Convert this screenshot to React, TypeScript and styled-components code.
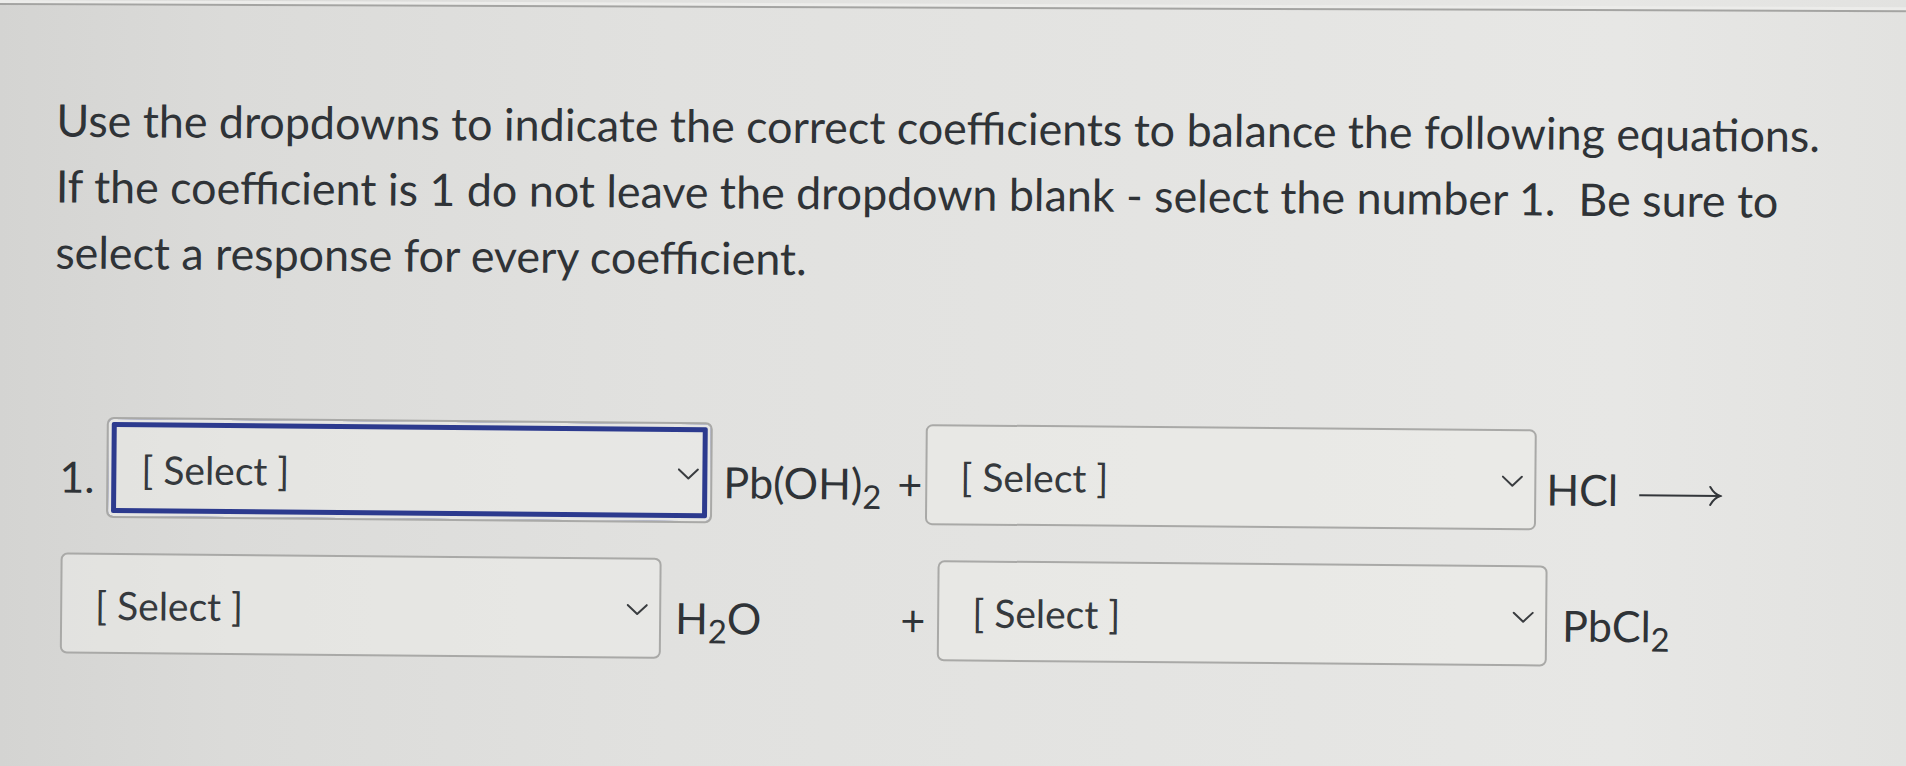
import React from "react";
import styled, { createGlobalStyle } from "styled-components";

const GlobalStyle = createGlobalStyle`
  html, body {
    margin: 0;
    padding: 0;
  }
  body {
    width: 1906px;
    height: 766px;
    overflow: hidden;
    background: linear-gradient(
      90deg,
      #d4d4d2 0%,
      #dbdbd9 12%,
      #e1e1df 35%,
      #e4e4e2 60%,
      #e7e7e5 85%,
      #e2e2e0 100%
    );
    font-family: Lato, "Open Sans", sans-serif;
    color: #2f3337;
  }
`;

const Screen = styled.div`
  width: 1906px;
  height: 766px;
  overflow: hidden;
`;

const TopEdge = styled.div`
  height: 3px;
  background: #ececea;
  border-bottom: 2px solid #a4a4a2;
  transform: rotate(0.22deg);
  transform-origin: 0 0;
`;

const Content = styled.div`
  padding-top: 81px;
  transform: rotate(0.5deg);
  transform-origin: 0 395px;
`;

const Prompt = styled.p`
  margin: 0;
  padding-left: 54px;
  font-size: 44.8px;
  line-height: 66px;
  white-space: nowrap;
`;

const Equation = styled.div`
  margin-top: 132px;
  margin-left: 60px;
  display: flex;
  flex-direction: column;
  gap: 35px;
`;

const EqRow = styled.div<{ $indent?: number }>`
  display: flex;
  align-items: flex-start;
  padding-left: ${(p) => p.$indent ?? 0}px;
`;

const Term = styled.span<{ $ml?: number }>`
  margin-left: ${(p) => p.$ml ?? 0}px;
  margin-top: 38px;
  font-size: 43px;
  line-height: 43px;
  white-space: nowrap;
`;

const Sub = styled.sub`
  font-size: 0.76em;
  line-height: 0;
  vertical-align: -0.28em;
`;

const SelectBox = styled.div<{ $ml?: number; $w: number; $focused?: boolean }>`
  box-sizing: border-box;
  margin-left: ${(p) => p.$ml ?? 0}px;
  width: ${(p) => p.$w}px;
  height: 101px;
  padding: 3px 11px 0 33px;
  display: flex;
  align-items: center;
  justify-content: space-between;
  border: 2px solid #a9a9a7;
  border-radius: 7px;
  background: rgba(236, 236, 234, 0.55);
  box-shadow: ${(p) =>
    p.$focused
      ? "inset 0 0 0 3px #e6e6e4, inset 0 0 0 8px #2c3a8e"
      : "none"};
`;

const SelectLabel = styled.span`
  font-size: 39px;
  line-height: 39px;
  color: #35393d;
`;

const Chevron = () => (
  <svg width="22" height="12" viewBox="0 0 22 12" aria-hidden="true">
    <polyline
      points="1.5,1.5 11,10.5 20.5,1.5"
      fill="none"
      stroke="#3a3d40"
      strokeWidth="2"
      strokeLinecap="round"
      strokeLinejoin="round"
    />
  </svg>
);

const ArrowWrap = styled.span<{ $ml?: number }>`
  margin-left: ${(p) => p.$ml ?? 0}px;
  margin-top: 54px;
  display: inline-flex;
`;

const ReactionArrow = ({ ml }: { ml: number }) => (
  <ArrowWrap $ml={ml}>
    <svg width="84" height="22" viewBox="0 0 84 22" aria-hidden="true">
      <line x1="1" y1="11" x2="81" y2="11" stroke="#33363a" strokeWidth="2" />
      <path
        d="M72 2 Q76 9 82 11 Q76 13 72 20"
        fill="none"
        stroke="#33363a"
        strokeWidth="2"
        strokeLinecap="round"
      />
    </svg>
  </ArrowWrap>
);

const Dropdown = ({
  ml,
  w,
  focused,
}: {
  ml?: number;
  w: number;
  focused?: boolean;
}) => (
  <SelectBox $ml={ml} $w={w} $focused={focused}>
    <SelectLabel>[ Select ]</SelectLabel>
    <Chevron />
  </SelectBox>
);

export default function App() {
  return (
    <Screen>
      <GlobalStyle />
      <TopEdge />
      <Content>
        <Prompt>
          Use the dropdowns to indicate the correct coefficients to balance the
          following equations.
          <br />
          If the coefficient is 1 do not leave the dropdown blank - select the
          number 1.&nbsp; Be sure to
          <br />
          select a response for every coefficient.
        </Prompt>
        <Equation>
          <EqRow>
            <Term>1.</Term>
            <Dropdown ml={12} w={606} focused />
            <Term $ml={11}>
              Pb(OH)<Sub>2</Sub>
            </Term>
            <Term $ml={16}>+</Term>
            <Dropdown ml={3} w={611} />
            <Term $ml={10}>HCl</Term>
            <ReactionArrow ml={20} />
          </EqRow>
          <EqRow $indent={2}>
            <Dropdown w={601} />
            <Term $ml={14}>
              H<Sub>2</Sub>O
            </Term>
            <Term $ml={139}>+</Term>
            <Dropdown ml={12} w={610} />
            <Term $ml={15}>
              PbCl<Sub>2</Sub>
            </Term>
          </EqRow>
        </Equation>
      </Content>
    </Screen>
  );
}
